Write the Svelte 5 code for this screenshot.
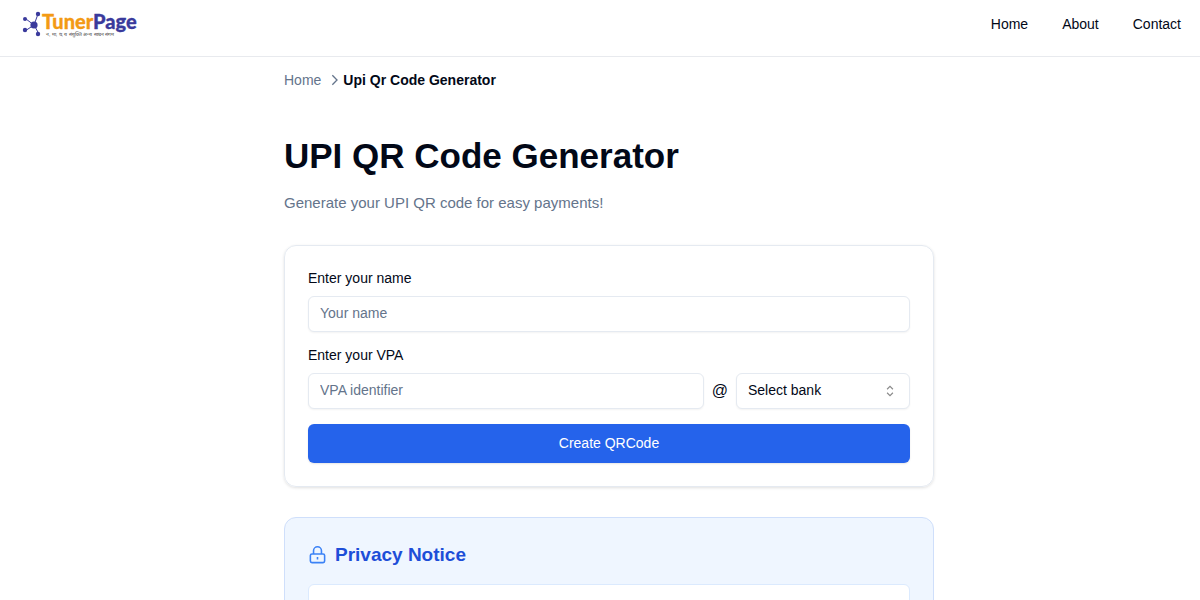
<script>
	const links = ['Home', 'About', 'Contact'];
	const banks = ['oksbi', 'okaxis', 'okicici', 'okhdfcbank', 'ybl', 'paytm'];

	let name = $state('');
	let vpa = $state('');
	let bank = $state('');
</script>

<header>
	<a class="logo" href="/" aria-label="TunerPage">
		<svg width="116" height="30" viewBox="0 0 116 30">
			<g stroke="#3a3a9c" stroke-width="1">
				<path d="M12 16 16 5M12 16 4 10M12 16 3 22M12 16 17 25" />
			</g>
			<g fill="#3a3a9c">
				<circle cx="12" cy="16" r="3.6" />
				<circle cx="16" cy="5" r="2.2" />
				<circle cx="3" cy="10" r="2" />
				<circle cx="3" cy="21" r="2.2" />
				<circle cx="16" cy="25" r="2.2" />
			</g>
			<text class="wordmark" x="20" y="20"><tspan fill="#f39a14" stroke="#f39a14">Tuner</tspan><tspan fill="#3a3a9c" stroke="#3a3a9c">Page</tspan></text>
			<text class="tagline" x="24" y="27">न, मा, थ, य संयुक्ति अन्य साधन संगम</text>
		</svg>
	</a>
	<nav>
		{#each links as link}
			<a href="/{link.toLowerCase()}">{link}</a>
		{/each}
	</nav>
</header>

<main>
	<div class="breadcrumb">
		<a href="/">Home</a>
		<svg width="16" height="16" viewBox="0 0 24 24" fill="none" stroke="currentColor" stroke-width="2">
			<path d="m8 19 7-7-7-7" />
		</svg>
		<span>Upi Qr Code Generator</span>
	</div>

	<h1>UPI QR Code Generator</h1>
	<p class="lead">Generate your UPI QR code for easy payments!</p>

	<form class="card" onsubmit={(e) => e.preventDefault()}>
		<div class="field">
			<label for="name">Enter your name</label>
			<input id="name" placeholder="Your name" bind:value={name} />
		</div>
		<div class="field">
			<label for="vpa">Enter your VPA</label>
			<div class="vpa">
				<input id="vpa" placeholder="VPA identifier" bind:value={vpa} />
				<span>@</span>
				<div class="select">
					<select aria-label="Bank" bind:value={bank}>
						<option value="">Select bank</option>
						{#each banks as item}
							<option value={item}>{item}</option>
						{/each}
					</select>
					<svg width="14" height="14" viewBox="0 0 24 24" fill="none" stroke="currentColor" stroke-width="2">
						<path d="m7 15 5 5 5-5M7 9l5-5 5 5" />
					</svg>
				</div>
			</div>
		</div>
		<button>Create QRCode</button>
	</form>

	<section class="notice">
		<h2>
			<svg width="19" height="19" viewBox="0 0 24 24" fill="none" stroke="currentColor" stroke-width="2">
				<rect x="3" y="10" width="18" height="11" rx="2" />
				<path d="M7 10V6a5 5 0 0 1 10 0v4M12 14v3" />
			</svg>
			Privacy Notice
		</h2>
		<div class="panel"></div>
	</section>
</main>

<style>
	:global(body) {
		background: #fff;
		color: #020817;
		font-family: 'Liberation Sans', Arial, sans-serif;
		font-size: 14px;
	}

	a {
		color: inherit;
		text-decoration: none;
	}

	header {
		display: flex;
		align-items: center;
		justify-content: space-between;
		padding: 9px 19px 17px 22px;
		border-bottom: 1px solid #e8eaee;
	}

	.logo svg {
		display: block;
		overflow: visible;
	}

	.wordmark {
		font-family: Lato, sans-serif;
		font-size: 20px;
		font-weight: 900;
		stroke-width: 0.3;
		stroke-linejoin: round;
	}

	.tagline {
		font-size: 5px;
		fill: #444;
	}

	nav {
		display: flex;
		gap: 34px;
	}

	main {
		max-width: 650px;
		margin: 0 auto;
		padding: 14px 0 32px 18px;
	}

	.breadcrumb {
		display: flex;
		align-items: center;
		line-height: 18px;
	}

	.breadcrumb a {
		color: #64748b;
		margin-right: 6px;
	}

	.breadcrumb svg {
		color: #64748b;
	}

	.breadcrumb span {
		font-weight: 600;
	}

	h1 {
		margin: 47px 0 0;
		font-size: 35px;
		line-height: 40px;
	}

	.lead {
		margin: 15px 0 30px;
		font-size: 15px;
		line-height: 24px;
		color: #64748b;
	}

	.card {
		display: flex;
		flex-direction: column;
		gap: 15px;
		padding: 24px 23px 23px;
		border: 1px solid #e5eaf1;
		border-radius: 12px;
		box-shadow: 0 1px 3px rgba(0, 0, 0, 0.12);
	}

	.field {
		display: flex;
		flex-direction: column;
		gap: 10px;
	}

	label {
		line-height: 16px;
	}

	input,
	select {
		box-sizing: border-box;
		width: 100%;
		height: 36px;
		padding: 0 11px 2px;
		border: 1px solid #e5eaf1;
		border-radius: 6px;
		background: #fff;
		box-shadow: 0 1px 2px rgba(0, 0, 0, 0.05);
		color: inherit;
		font: inherit;
	}

	input::placeholder {
		color: #64748b;
	}

	.vpa {
		display: flex;
		align-items: center;
		gap: 8px;
	}

	.vpa input {
		flex: 1;
		min-width: 0;
	}

	.vpa span {
		font-size: 16px;
	}

	.select {
		position: relative;
		flex: 0 0 174px;
	}

	select {
		display: block;
		appearance: none;
	}

	.select svg {
		position: absolute;
		top: 11px;
		right: 13px;
		color: #8a8a8a;
		pointer-events: none;
	}

	button {
		height: 39px;
		padding: 0 0 2px;
		border: none;
		border-radius: 6px;
		background: #2563eb;
		box-shadow: 0 1px 2px rgba(0, 0, 0, 0.1);
		color: #fff;
		font: inherit;
		cursor: pointer;
	}

	.notice {
		margin-top: 30px;
		padding: 23px;
		border: 1px solid #cfdffb;
		border-radius: 12px;
		background: #eff6ff;
	}

	h2 {
		display: flex;
		align-items: center;
		gap: 8px;
		margin: 0 0 15px;
		font-size: 19px;
		line-height: 28px;
		color: #1d4ed8;
	}

	h2 svg {
		color: #3b82f6;
	}

	.panel {
		min-height: 96px;
		border: 1px solid #dbeafe;
		border-radius: 6px;
		background: #fff;
	}
</style>
